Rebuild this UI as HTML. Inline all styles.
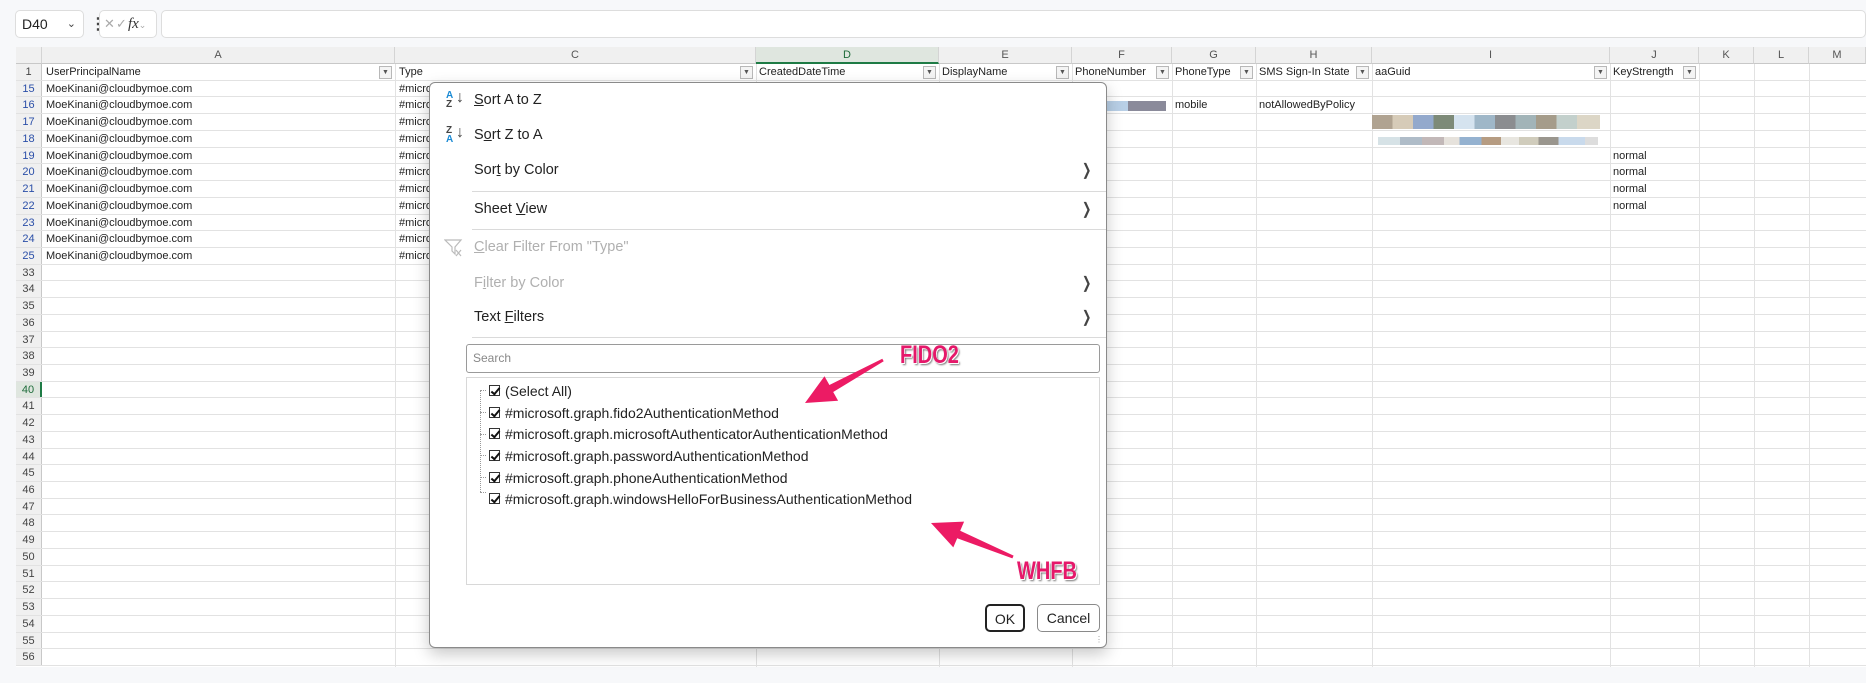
<!DOCTYPE html>
<html><head><meta charset="utf-8"><style>
*{box-sizing:border-box;margin:0;padding:0}
body{width:1866px;height:683px;overflow:hidden;background:#f7f8fa;font-family:"Liberation Sans",sans-serif;position:relative;color:#222}
.abs{position:absolute}
.grid{position:absolute;left:16px;top:47px;width:1850px;height:620px;background:#fff}
.colh{position:absolute;top:0;height:17px;background:#f0f0f0;border-right:1px solid #d4d4d4;border-bottom:1px solid #c8c8c8;font-size:11px;color:#555;text-align:center;line-height:17px}
.row{position:absolute;left:0;width:1850px;height:16.72px;border-bottom:1px solid #e2e2e2;font-size:11px;line-height:16px;white-space:nowrap}
.rn{position:absolute;left:0;width:26px;height:100%;background:#f0f0f0;border-right:1px solid #c8c8c8;text-align:center;color:#444}
.c{position:absolute;top:0}
.vl{position:absolute;top:17px;width:1px;height:603px;background:#e2e2e2}
.dd{position:absolute;top:2px;width:13px;height:13px;border:1px solid #b8b8b8;background:#f4f4f4;font-size:7px;line-height:11px;text-align:center;color:#555}
.dlg{position:absolute;left:429px;top:82px;width:678px;height:566px;background:#fff;border:1px solid #8a8a8a;border-radius:6px;box-shadow:0 6px 16px rgba(0,0,0,.22)}
.mi{position:absolute;left:44px;font-size:14.5px;color:#222}
.dis{color:#b0b0b0}
.sep{position:absolute;left:42px;width:634px;height:1px;background:#dadada}
.chev{position:absolute;left:650px;font-size:16px;color:#444;transform:scaleX(.7)}
.it{position:absolute;left:58px;font-size:14px;color:#222;white-space:nowrap}
.cb{position:absolute;left:59px;width:11px;height:11px;border:1px solid #333;background:#fff}
.cb:after{content:"";position:absolute;left:3px;top:0px;width:3px;height:7px;border:solid #111;border-width:0 2px 2px 0;transform:rotate(40deg)}
.btn{position:absolute;height:28px;border:1px solid #8a8a8a;border-radius:5px;font-size:14px;text-align:center;line-height:26px;background:#fff}
.lbl{position:absolute;font-weight:bold;color:#e5186a;font-size:25px;text-shadow:1px 1px 0 #fff,2px 2px 2px #777;transform-origin:left top}
</style></head><body>
<div class="abs" style="left:15px;top:10px;width:69px;height:28px;background:#fff;border:1px solid #ddd;border-radius:5px;font-size:14px;line-height:26px;padding-left:6px">D40<span style="position:absolute;right:7px;top:0;font-size:11px;color:#444">&#8964;</span></div>
<div class="abs" style="left:90px;top:14px;font-size:16px;color:#444;font-weight:bold">&#8942;</div>
<div class="abs" style="left:99px;top:10px;width:58px;height:28px;background:#fff;border:1px solid #ddd;border-radius:5px;font-size:13px;line-height:26px;color:#aaa;padding-left:4px;white-space:nowrap;overflow:hidden">&#10005;&#8202;&#10003;&#8202;<i style="color:#333;font-family:'Liberation Serif',serif;font-size:15px">fx</i><span style="font-size:9px">&#8964;</span></div>
<div class="abs" style="left:161px;top:10px;width:1705px;height:28px;background:#fff;border:1px solid #ddd;border-radius:5px"></div>

<div class="grid">
<div class="colh" style="left:0;width:26px;background:#f0f0f0"></div>
<div class="colh" style="left:26px;width:353px">A</div>
<div class="colh" style="left:379px;width:361px">C</div>
<div class="colh" style="left:740px;width:183px;background:#dfe6df;color:#1e6b3a;border-bottom:2px solid #1e7b45">D</div>
<div class="colh" style="left:923px;width:133px">E</div>
<div class="colh" style="left:1056px;width:100px">F</div>
<div class="colh" style="left:1156px;width:84px">G</div>
<div class="colh" style="left:1240px;width:116px">H</div>
<div class="colh" style="left:1356px;width:238px">I</div>
<div class="colh" style="left:1594px;width:89px">J</div>
<div class="colh" style="left:1683px;width:55px">K</div>
<div class="colh" style="left:1738px;width:55px">L</div>
<div class="colh" style="left:1793px;width:57px">M</div>

<div class="vl" style="left:379px"></div><div class="vl" style="left:740px"></div><div class="vl" style="left:923px"></div><div class="vl" style="left:1056px"></div><div class="vl" style="left:1156px"></div><div class="vl" style="left:1240px"></div><div class="vl" style="left:1356px"></div><div class="vl" style="left:1594px"></div><div class="vl" style="left:1683px"></div><div class="vl" style="left:1738px"></div><div class="vl" style="left:1793px"></div>

<div class="row" style="top:17px"><div class="rn">1</div>
<span class="c" style="left:30px">UserPrincipalName</span><div class="dd" style="left:363px">&#9660;</div>
<span class="c" style="left:383px">Type</span><div class="dd" style="left:724px">&#9660;</div>
<span class="c" style="left:743px">CreatedDateTime</span><div class="dd" style="left:907px">&#9660;</div>
<span class="c" style="left:926px">DisplayName</span><div class="dd" style="left:1040px">&#9660;</div>
<span class="c" style="left:1059px">PhoneNumber</span><div class="dd" style="left:1140px">&#9660;</div>
<span class="c" style="left:1159px">PhoneType</span><div class="dd" style="left:1224px">&#9660;</div>
<span class="c" style="left:1243px">SMS Sign-In State</span><div class="dd" style="left:1340px">&#9660;</div>
<span class="c" style="left:1359px">aaGuid</span><div class="dd" style="left:1578px">&#9660;</div>
<span class="c" style="left:1597px">KeyStrength</span><div class="dd" style="left:1667px">&#9660;</div>
</div>
<div class="row" style="top:33.7px"><div class="rn" style="color:#2b4fa8">15</div><span class="c" style="left:30px">MoeKinani@cloudbymoe.com</span><span class="c" style="left:383px">#micro</span></div>
<div class="row" style="top:50.4px"><div class="rn" style="color:#2b4fa8">16</div><span class="c" style="left:30px">MoeKinani@cloudbymoe.com</span><span class="c" style="left:383px">#micro</span><div class="c" style="left:1090px;top:4px;width:22px;height:10px;background:#b8cfe6"></div><div class="c" style="left:1112px;top:4px;width:38px;height:10px;background:#8a8a9a"></div><span class="c" style="left:1159px">mobile</span><span class="c" style="left:1243px">notAllowedByPolicy</span></div>
<div class="row" style="top:67.2px"><div class="rn" style="color:#2b4fa8">17</div><span class="c" style="left:30px">MoeKinani@cloudbymoe.com</span><span class="c" style="left:383px">#micro</span>
<div class="c" style="left:1356px;top:1px;height:14px;width:228px;background:linear-gradient(90deg,#b0a391 0 9%,#d6cbb8 9% 18%,#93a9cc 18% 27%,#7d8a78 27% 36%,#d5e3ef 36% 45%,#9fb7c8 45% 54%,#8b8d90 54% 63%,#a2b4b8 63% 72%,#a59c8a 72% 81%,#c3d0cc 81% 90%,#dcd6c6 90%)"></div></div>
<div class="row" style="top:83.9px"><div class="rn" style="color:#2b4fa8">18</div><span class="c" style="left:30px">MoeKinani@cloudbymoe.com</span><span class="c" style="left:383px">#micro</span>
<div class="c" style="left:1362px;top:6px;height:8px;width:220px;background:linear-gradient(90deg,#d6e2e6 0 10%,#afbcc8 10% 20%,#c2b8b8 20% 30%,#e6e2dc 30% 37%,#95b2d0 37% 47%,#b69c82 47% 56%,#e8e6e0 56% 64%,#d0ccbc 64% 73%,#9a968e 73% 82%,#c9daec 82% 94%,#ddd 94%)"></div></div>
<div class="row" style="top:100.6px"><div class="rn" style="color:#2b4fa8">19</div><span class="c" style="left:30px">MoeKinani@cloudbymoe.com</span><span class="c" style="left:383px">#micro</span><span class="c" style="left:1597px">normal</span></div>
<div class="row" style="top:117.3px"><div class="rn" style="color:#2b4fa8">20</div><span class="c" style="left:30px">MoeKinani@cloudbymoe.com</span><span class="c" style="left:383px">#micro</span><span class="c" style="left:1597px">normal</span></div>
<div class="row" style="top:134px"><div class="rn" style="color:#2b4fa8">21</div><span class="c" style="left:30px">MoeKinani@cloudbymoe.com</span><span class="c" style="left:383px">#micro</span><span class="c" style="left:1597px">normal</span></div>
<div class="row" style="top:150.8px"><div class="rn" style="color:#2b4fa8">22</div><span class="c" style="left:30px">MoeKinani@cloudbymoe.com</span><span class="c" style="left:383px">#micro</span><span class="c" style="left:1597px">normal</span></div>
<div class="row" style="top:167.5px"><div class="rn" style="color:#2b4fa8">23</div><span class="c" style="left:30px">MoeKinani@cloudbymoe.com</span><span class="c" style="left:383px">#micro</span></div>
<div class="row" style="top:184.2px"><div class="rn" style="color:#2b4fa8">24</div><span class="c" style="left:30px">MoeKinani@cloudbymoe.com</span><span class="c" style="left:383px">#micro</span></div>
<div class="row" style="top:200.9px"><div class="rn" style="color:#2b4fa8">25</div><span class="c" style="left:30px">MoeKinani@cloudbymoe.com</span><span class="c" style="left:383px">#micro</span></div>
<div class="row" style="top:217.6px"><div class="rn">33</div></div>
<div class="row" style="top:234.4px"><div class="rn">34</div></div>
<div class="row" style="top:251.1px"><div class="rn">35</div></div>
<div class="row" style="top:267.8px"><div class="rn">36</div></div>
<div class="row" style="top:284.5px"><div class="rn">37</div></div>
<div class="row" style="top:301.2px"><div class="rn">38</div></div>
<div class="row" style="top:318px"><div class="rn">39</div></div>
<div class="row" style="top:334.7px"><div class="rn" style="background:#dfe6df;color:#1e6b3a;border-right:2px solid #1e7b45">40</div></div>
<div class="row" style="top:351.4px"><div class="rn">41</div></div>
<div class="row" style="top:368.1px"><div class="rn">42</div></div>
<div class="row" style="top:384.8px"><div class="rn">43</div></div>
<div class="row" style="top:401.6px"><div class="rn">44</div></div>
<div class="row" style="top:418.3px"><div class="rn">45</div></div>
<div class="row" style="top:435px"><div class="rn">46</div></div>
<div class="row" style="top:451.7px"><div class="rn">47</div></div>
<div class="row" style="top:468.4px"><div class="rn">48</div></div>
<div class="row" style="top:485.2px"><div class="rn">49</div></div>
<div class="row" style="top:501.9px"><div class="rn">50</div></div>
<div class="row" style="top:518.6px"><div class="rn">51</div></div>
<div class="row" style="top:535.3px"><div class="rn">52</div></div>
<div class="row" style="top:552px"><div class="rn">53</div></div>
<div class="row" style="top:568.8px"><div class="rn">54</div></div>
<div class="row" style="top:585.5px"><div class="rn">55</div></div>
<div class="row" style="top:602.2px"><div class="rn">56</div></div>
</div>

<div class="dlg">
<div class="abs" style="left:16px;top:8px;font-size:10px;line-height:9px;color:#1a8ad4;font-weight:bold">A<br><span style="color:#444">Z</span></div><div class="abs" style="left:26px;top:6px;font-size:16px;color:#444">&#8595;</div>
<div class="mi" style="top:9px"><u>S</u>ort A to Z</div>
<div class="abs" style="left:16px;top:43px;font-size:10px;line-height:9px;color:#444;font-weight:bold">Z<br><span style="color:#1a8ad4">A</span></div><div class="abs" style="left:26px;top:41px;font-size:16px;color:#444">&#8595;</div>
<div class="mi" style="top:44px">S<u>o</u>rt Z to A</div>
<div class="mi" style="top:79px">Sor<u>t</u> by Color</div><div class="chev" style="top:77px">&#10095;</div>
<div class="sep" style="top:108px"></div>
<div class="mi" style="top:118px">Sheet <u>V</u>iew</div><div class="chev" style="top:116px">&#10095;</div>
<div class="sep" style="top:146px"></div>
<svg class="abs" style="left:14px;top:155px" width="20" height="20"><path d="M1 2H17L11 9V16L8 13V9Z" fill="none" stroke="#bbb" stroke-width="1.2"/><path d="M12 12L17 18M17 12L12 18" stroke="#bbb" stroke-width="1.2"/></svg>
<div class="mi dis" style="top:156px"><u>C</u>lear Filter From "Type"</div>
<div class="mi dis" style="top:192px">F<u>i</u>lter by Color</div><div class="chev dis" style="top:190px">&#10095;</div>
<div class="mi" style="top:226px">Text <u>F</u>ilters</div><div class="chev" style="top:224px">&#10095;</div>
<div class="sep" style="top:254px"></div>
<div class="abs" style="left:36px;top:261px;width:634px;height:29px;border:1px solid #9a9a9a;border-radius:3px;font-size:12px;color:#888;line-height:27px;padding-left:6px">Search</div>
<div class="abs" style="left:36px;top:294px;width:634px;height:208px;border:1px solid #d8d8d8">
<div class="abs" style="left:13px;top:12px;width:1px;height:102px;border-left:1px dotted #999"></div>
<div class="abs" style="left:13px;top:12px;width:6px;border-top:1px dotted #999"></div>
<div class="abs" style="left:13px;top:34px;width:6px;border-top:1px dotted #999"></div>
<div class="abs" style="left:13px;top:56px;width:6px;border-top:1px dotted #999"></div>
<div class="abs" style="left:13px;top:77px;width:6px;border-top:1px dotted #999"></div>
<div class="abs" style="left:13px;top:99px;width:6px;border-top:1px dotted #999"></div>
<div class="abs" style="left:13px;top:114px;width:6px;border-top:1px dotted #999"></div>
</div>
<div class="cb" style="top:302px"></div><div class="it" style="top:300px;left:75px">(Select All)</div>
<div class="cb" style="top:324px"></div><div class="it" style="top:322px;left:75px">#microsoft.graph.fido2AuthenticationMethod</div>
<div class="cb" style="top:345px"></div><div class="it" style="top:343px;left:75px">#microsoft.graph.microsoftAuthenticatorAuthenticationMethod</div>
<div class="cb" style="top:367px"></div><div class="it" style="top:365px;left:75px">#microsoft.graph.passwordAuthenticationMethod</div>
<div class="cb" style="top:389px"></div><div class="it" style="top:387px;left:75px">#microsoft.graph.phoneAuthenticationMethod</div>
<div class="cb" style="top:410px"></div><div class="it" style="top:408px;left:75px">#microsoft.graph.windowsHelloForBusinessAuthenticationMethod</div>
<div class="btn" style="left:555px;top:521px;width:40px;border:2px solid #222">OK</div>
<div class="btn" style="left:607px;top:521px;width:63px">Cancel</div>
<div class="abs" style="left:665px;top:552px;font-size:8px;color:#999">&#8942;</div>
</div>

<div class="lbl" style="left:900px;top:341px;transform:scaleX(.8)">FIDO2</div>
<div class="lbl" style="left:1017px;top:557px;transform:scaleX(.8)">WHFB</div>
<svg class="abs" style="left:0;top:0" width="1866" height="683">
<polygon points="805,403 824.5,376.2 829.4,385 882.3,358.7 883.7,361.3 833.2,392 838.1,400.8" fill="#ec1b64"/>
<polygon points="931,523 964.1,521.6 960.2,530.8 1013.6,555.6 1012.4,558.4 957.2,538.2 953.3,547.4" fill="#ec1b64"/>
</svg>
</body></html>
